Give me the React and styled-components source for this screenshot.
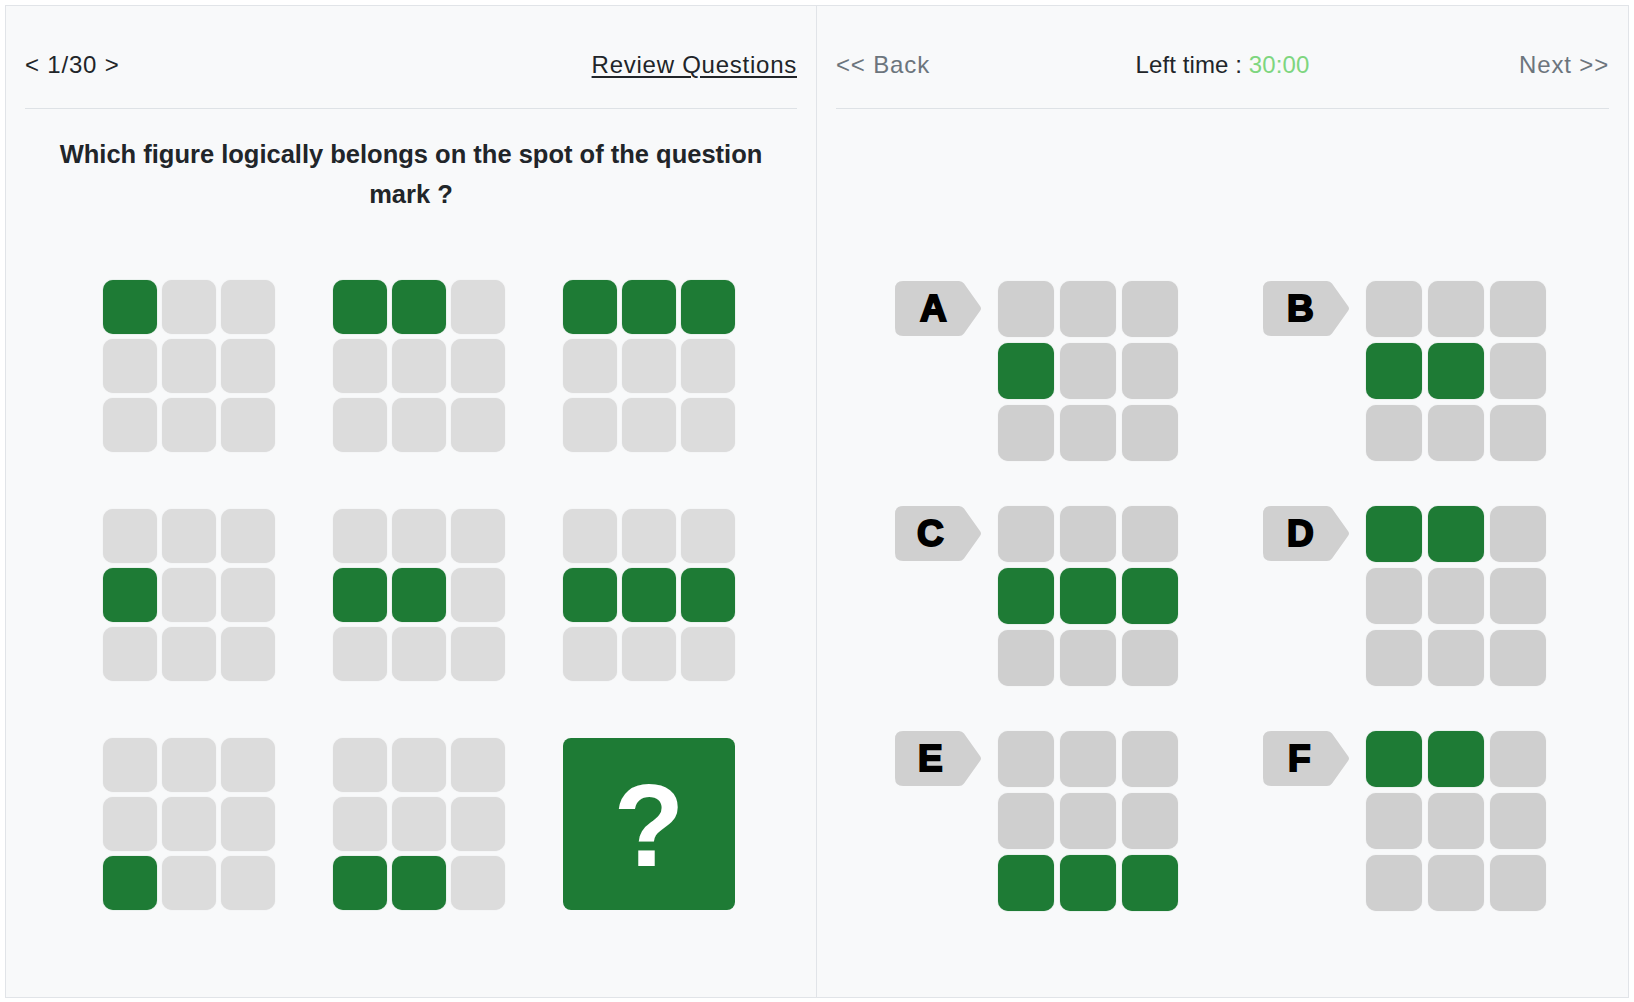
import React from "react";
import styled, { createGlobalStyle } from "styled-components";

const GlobalStyle = createGlobalStyle`
  html, body { margin: 0; padding: 0; background: #ffffff; }
  body { font-family: "Liberation Sans", Arial, Helvetica, sans-serif; color: #212529; }
  * { box-sizing: border-box; }
`;

const Page = styled.div`
  display: grid;
  grid-template-columns: 812px 812px;
  width: 1624px;
  height: 993px;
  margin: 5px 0 0 5px;
`;

const Panel = styled.section`
  background: #f8f9fa;
  border: 1px solid #e1e4e8;
  border-left: ${(p) => (p.$noLeft ? "none" : "1px solid #e1e4e8")};
  padding: 0 19px;
  display: flex;
  flex-direction: column;
`;

const Header = styled.header`
  display: grid;
  grid-template-columns: ${(p) => (p.$three ? "1fr auto 1fr" : "auto auto")};
  justify-content: space-between;
  align-items: center;
  padding: 45px 0 29px;
  border-bottom: 1px solid #dee2e6;
  font-size: 24px;
  line-height: 28px;
`;

const Counter = styled.span`
  color: #212529;
  letter-spacing: 0.8px;
`;

const ReviewLink = styled.a`
  color: #212529;
  letter-spacing: 0.75px;
  text-decoration: underline;
  text-underline-offset: 3px;
  text-decoration-thickness: 1.5px;
  cursor: pointer;
`;

const NavLink = styled.a`
  color: #6c757d;
  letter-spacing: 0.85px;
  cursor: pointer;
  justify-self: ${(p) => (p.$end ? "end" : "start")};
`;

const Timer = styled.span`
  color: #212529;
  justify-self: center;
  letter-spacing: 0.1px;
`;

const TimeValue = styled.span`
  color: #7ed67f;
`;

const Title = styled.h2`
  margin: 25px auto 0;
  max-width: 730px;
  font-size: 25.5px;
  line-height: 40px;
  font-weight: 700;
  text-align: center;
  color: #212529;
`;

const FigureMatrix = styled.div`
  display: grid;
  grid-template-columns: repeat(3, 172px);
  column-gap: 58px;
  row-gap: 57px;
  margin-top: 66px;
  padding-left: 78px;
`;

const Figure = styled.div`
  display: grid;
  grid-template-columns: repeat(3, ${(p) => p.$cell}px);
  grid-auto-rows: ${(p) => p.$cell}px;
  gap: ${(p) => p.$gap}px;
`;

const Cell = styled.div`
  border-radius: 10px;
  background: ${(p) => (p.$on ? "#1e7b35" : p.$dark ? "#cfcfcf" : "#dcdcdc")};
  box-shadow: 0 0 1px ${(p) => (p.$on ? "rgba(30,123,53,0.6)" : "rgba(200,200,200,0.6)")};
`;

const QuestionBox = styled.div`
  width: 172px;
  height: 172px;
  border-radius: 8px;
  background: #1e7b35;
  display: flex;
  align-items: center;
  justify-content: center;
  color: #ffffff;
  font-family: "Liberation Sans", Arial, sans-serif;
  font-weight: 700;
  font-size: 116px;
  line-height: 1;
  padding-top: 4px;
`;

const Options = styled.div`
  display: grid;
  grid-template-columns: repeat(2, 283px);
  column-gap: 85px;
  row-gap: 45px;
  justify-content: center;
  margin-top: 172px;
  margin-left: -4px;
`;

const Option = styled.div`
  display: flex;
  align-items: flex-start;
  gap: 16px;
  cursor: pointer;
`;

const Tag = styled.div`
  width: 87px;
  height: 55px;
  flex: none;
  background: #d0d0d0;
  clip-path: path("M8,0 H64 Q67,0 69,2.5 L85,25 Q87,27.5 85,30 L69,52.5 Q67,55 64,55 H8 Q0,55 0,47 V8 Q0,0 8,0 Z");
  display: flex;
  align-items: center;
  padding-left: ${(p) => p.$pad}px;
  font-family: "Liberation Sans", Arial, sans-serif;
  font-weight: 700;
  font-size: 37px;
  line-height: 1;
  color: #000000;
  -webkit-text-stroke: 2px #000000;
`;

const mk = (cells) => {
  const s = new Set(cells);
  return Array.from({ length: 9 }, (_, i) => s.has(i));
};

const matrix = [
  mk([0]), mk([0, 1]), mk([0, 1, 2]),
  mk([3]), mk([3, 4]), mk([3, 4, 5]),
  mk([6]), mk([6, 7]), null,
];

const options = [
  { key: "A", cells: mk([3]), pad: 25 },
  { key: "B", cells: mk([3, 4]), pad: 24 },
  { key: "C", cells: mk([3, 4, 5]), pad: 22 },
  { key: "D", cells: mk([0, 1]), pad: 24 },
  { key: "E", cells: mk([6, 7, 8]), pad: 23 },
  { key: "F", cells: mk([0, 1]), pad: 25 },
];

export default function App() {
  return (
    <>
      <GlobalStyle />
      <Page>
        <Panel>
          <Header>
            <Counter>&lt; 1/30 &gt;</Counter>
            <ReviewLink>Review Questions</ReviewLink>
          </Header>
          <Title>Which figure logically belongs on the spot of the question mark ?</Title>
          <FigureMatrix>
            {matrix.map((fig, i) =>
              fig ? (
                <Figure key={i} $cell={54} $gap={5}>
                  {fig.map((on, j) => (
                    <Cell key={j} $on={on} />
                  ))}
                </Figure>
              ) : (
                <QuestionBox key={i}>?</QuestionBox>
              )
            )}
          </FigureMatrix>
        </Panel>
        <Panel $noLeft>
          <Header $three>
            <NavLink>&lt;&lt; Back</NavLink>
            <Timer>
              Left time : <TimeValue>30:00</TimeValue>
            </Timer>
            <NavLink $end>Next &gt;&gt;</NavLink>
          </Header>
          <Options>
            {options.map((o) => (
              <Option key={o.key}>
                <Tag $pad={o.pad}>{o.key}</Tag>
                <Figure $cell={56} $gap={6}>
                  {o.cells.map((on, j) => (
                    <Cell key={j} $on={on} $dark />
                  ))}
                </Figure>
              </Option>
            ))}
          </Options>
        </Panel>
      </Page>
    </>
  );
}
